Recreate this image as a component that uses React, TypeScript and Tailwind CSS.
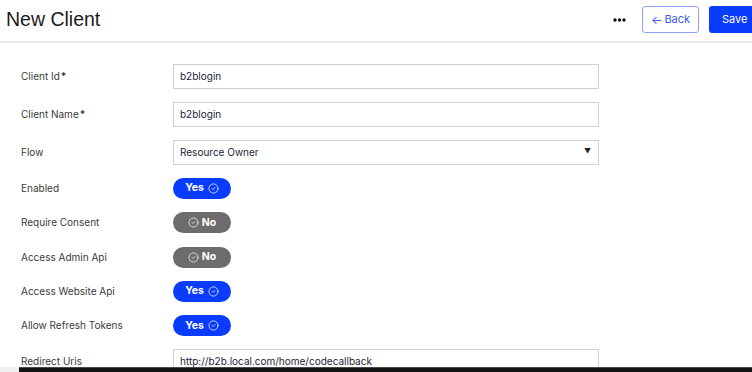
import { CircleCheck } from "lucide-react";

const font = { fontFamily: "Inter, 'Noto Sans', sans-serif" };

// Pill toggle shown for boolean fields
function Toggle({ on }: { on: boolean }) {
  if (on) {
    return (
      <div className="flex h-[21px] w-[58px] items-center justify-center gap-[4px] rounded-full bg-[#0a3cff] text-[10.5px] font-bold text-white">
        <span>Yes</span>
        <CircleCheck size={11} strokeWidth={1.6} />
      </div>
    );
  }
  return (
    <div className="flex h-[21px] w-[58px] items-center justify-center gap-[3px] rounded-full bg-[#6c6c6c] text-[10.5px] font-bold text-white">
      <CircleCheck size={11} strokeWidth={1.6} />
      <span>No</span>
    </div>
  );
}

function TextInput({ value, select }: { value: string; select?: boolean }) {
  return (
    <div className="flex h-[25px] w-[426px] items-center justify-between border border-[#d2d2d2] bg-white pl-[6px] pr-[7px] text-[10px] text-[#1c1c3a]">
      <span>{value}</span>
      {select && <span className="text-[7px] text-[#222]">▼</span>}
    </div>
  );
}

function Row({
  label,
  required,
  height,
  children,
}: {
  label: string;
  required?: boolean;
  height: string;
  children: React.ReactNode;
}) {
  return (
    <div className={`flex items-center ${height}`}>
      <div className="w-[152px] text-[10px] text-[#3a3a3a]">
        {label}
        {required && <span className="ml-[1px] font-bold">*</span>}
      </div>
      {children}
    </div>
  );
}

export default function App() {
  return (
    <div className="relative h-[372px] w-[752px] overflow-hidden bg-white" style={font}>
      <header className="flex h-[43px] items-center justify-between border-b-2 border-[#ebebeb] pb-[2px]">
        <h1
          className="pl-[6px] text-[19.5px] text-[#1a1a1a]"
          style={{ fontFamily: "'Liberation Sans', Arial, sans-serif" }}
        >
          New Client
        </h1>
        <div className="flex items-center">
          <svg width="13" height="4" viewBox="0 0 13 4" className="mr-[16px]">
            <circle cx="2" cy="2" r="1.7" fill="#111" />
            <circle cx="6.5" cy="2" r="1.7" fill="#111" />
            <circle cx="11" cy="2" r="1.7" fill="#111" />
          </svg>
          <button className="mr-[10px] flex h-[27px] w-[57px] items-center justify-center gap-[2px] rounded-[3px] border border-[#8ea3f6] text-[11px] text-[#3b5bf0]">
            <span className="text-[12px]">←</span>
            <span>Back</span>
          </button>
          <button className="flex h-[27px] w-[43px] items-center justify-start rounded-l-[3px] bg-[#0a3cff] pl-[13px] text-[11px] text-white">
            Save
          </button>
        </div>
      </header>

      <main className="pl-[21px] pt-[14px]">
        <Row label="Client Id" required height="h-[38px]">
          <TextInput value="b2blogin" />
        </Row>
        <Row label="Client Name" required height="h-[38px]">
          <TextInput value="b2blogin" />
        </Row>
        <Row label="Flow" height="h-[38px]">
          <TextInput value="Resource Owner" select />
        </Row>
        <Row label="Enabled" height="h-[34px]">
          <Toggle on />
        </Row>
        <Row label="Require Consent" height="h-[35px]">
          <Toggle on={false} />
        </Row>
        <Row label="Access Admin Api" height="h-[34px]">
          <Toggle on={false} />
        </Row>
        <Row label="Access Website Api" height="h-[34px]">
          <Toggle on />
        </Row>
        <Row label="Allow Refresh Tokens" height="h-[35px]">
          <Toggle on />
        </Row>
        <Row label="Redirect Uris" height="h-[36px]">
          <TextInput value="http://b2b.local.com/home/codecallback" />
        </Row>
      </main>

      {/* screen edge strip at the bottom */}
      <div className="absolute bottom-0 left-0 right-0 flex h-[5px] bg-[#f0f0f0]">
        <div className="ml-[19px] flex-1 border-t border-[#4a4a4a] bg-[#141414]" />
      </div>
    </div>
  );
}
